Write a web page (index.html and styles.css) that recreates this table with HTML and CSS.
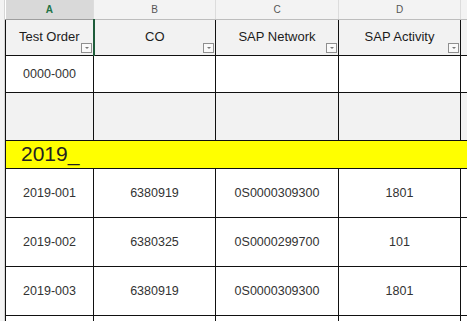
FILE: index.html
```html
<!DOCTYPE html>
<html lang="en">
<head>
    <meta charset="UTF-8">
    <title>Test Orders</title>
    <link rel="stylesheet" href="styles.css">
</head>
<body>

<div class="sheet">
    <!-- Row number strip -->
    <div class="row-strip"></div>

    <table class="grid">
        <colgroup>
            <col class="col-a">
            <col class="col-b">
            <col class="col-c">
            <col class="col-d">
            <col class="col-e">
        </colgroup>

        <!-- Column letters -->
        <tr class="letters">
            <td class="letter selected">A</td>
            <td class="letter">B</td>
            <td class="letter">C</td>
            <td class="letter">D</td>
            <td class="letter"></td>
        </tr>

        <!-- Header row with filters -->
        <tr class="head">
            <td class="active">Test Order<span class="filter"></span></td>
            <td>CO<span class="filter"></span></td>
            <td>SAP Network<span class="filter"></span></td>
            <td>SAP Activity<span class="filter"></span></td>
            <td></td>
        </tr>

        <tr class="row-short">
            <td>0000-000</td><td></td><td></td><td></td><td></td>
        </tr>

        <tr class="row-blank">
            <td></td><td></td><td></td><td></td><td></td>
        </tr>

        <tr class="year">
            <td colspan="5">2019_</td>
        </tr>

        <tr class="row">
            <td>2019-001</td><td>6380919</td><td>0S0000309300</td><td>1801</td><td></td>
        </tr>
        <tr class="row">
            <td>2019-002</td><td>6380325</td><td>0S0000299700</td><td>101</td><td></td>
        </tr>
        <tr class="row">
            <td>2019-003</td><td>6380919</td><td>0S0000309300</td><td>1801</td><td></td>
        </tr>
        <tr class="row-cut">
            <td></td><td></td><td></td><td></td><td></td>
        </tr>
    </table>
</div>

</body>
</html>
```

FILE: styles.css
```css
* {
    margin: 0;
    padding: 0;
    box-sizing: border-box;
}

body {
    background: #fff;
    font-family: 'Liberation Sans', Arial, sans-serif;
    width: 467px;
    height: 321px;
    overflow: hidden;
}

.sheet {
    display: flex;
    align-items: flex-start;
}

/* Row numbers (mostly off screen) */
.row-strip {
    width: 5px;
    flex-shrink: 0;
    height: 321px;
    background: #f3f3f3;
    border-right: 1px solid #d6d6d6;
}

.grid {
    border-collapse: collapse;
    table-layout: fixed;
    width: 462px;
}

.col-a { width: 88px; }
.col-b { width: 122px; }
.col-c { width: 123px; }
.col-d { width: 122px; }
.col-e { width: 7px; }

.grid td {
    border: 1px solid #111;
    text-align: center;
    vertical-align: middle;
    color: #333;
    font-size: 12.5px;
    white-space: nowrap;
    overflow: hidden;
}

/* Column letters */
.letters td.letter {
    height: 19px;
    border: none;
    border-right: 1px solid #dcdcdc;
    border-bottom: 1px solid #bdbdbd;
    background: #f3f3f3;
    color: #555;
    font-size: 10px;
}

.letters td.selected {
    background: #d9d9d9;
    color: #217346;
    font-weight: bold;
    border-bottom: 1px solid #9e9e9e;
}

/* Header row */
.head td {
    position: relative;
    height: 36px;
    background: #f2f2f2;
    color: #1c1c1c;
    font-size: 13px;
    padding-bottom: 2px;
}

.head td.active {
    border-right: 2px solid #1e5c3a;
}

.filter {
    position: absolute;
    right: 1px;
    bottom: 2px;
    width: 11px;
    height: 10px;
    background: #fafafa;
    border: 1px solid #8f8f8f;
}

.filter::after {
    content: "";
    position: absolute;
    left: 3px;
    top: 3px;
    border-left: 2px solid transparent;
    border-right: 2px solid transparent;
    border-top: 2px solid #777;
}

.row-short td {
    height: 37px;
}

.row-blank td {
    height: 48px;
    background: #f2f2f2;
}

.year td {
    height: 28px;
    background: #ffff00;
    text-align: left;
    padding-left: 15px;
    font-size: 21px;
    color: #222;
}

.row td {
    height: 49px;
}

.row-cut td {
    height: 6px;
    border-bottom: none;
}
```
